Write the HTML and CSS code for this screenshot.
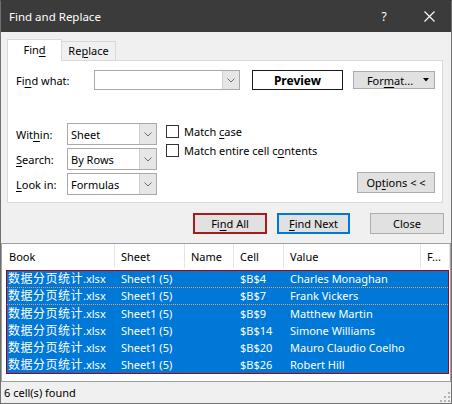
FILE: index.html
```html
<!DOCTYPE html>
<html lang="en">
<head>
    <meta charset="UTF-8">
    <meta name="viewport" content="width=device-width, initial-scale=1.0">
    <title>Find and Replace</title>
    <link rel="stylesheet" href="styles.css">
</head>
<body>
<div class="window">
    <div class="titlebar">
        <span class="title">Find and Replace</span>
        <span class="help">?</span>
        <span class="close-x">
            <svg width="11" height="11" viewBox="0 0 11 11"><path d="M0.5 0.5 L10.5 10.5 M10.5 0.5 L0.5 10.5" stroke="#fff" stroke-width="1.1" fill="none"/></svg>
        </span>
    </div>

    <div class="dialog">
        <div class="tabs">
            <div class="tab active">Fin<u>d</u></div>
            <div class="tab">Re<u>p</u>lace</div>
        </div>

        <div class="panel">
            <div class="find-row">
                <label class="find-label">Fi<u>n</u>d what:</label>
                <div class="combo combo-find">
                    <span class="combo-text"></span>
                    <span class="combo-btn"><svg width="8" height="5" viewBox="0 0 8 5"><polyline points="0.5,0.5 4,4 7.5,0.5" stroke="#6d6d6d" fill="none"/></svg></span>
                </div>
                <div class="preview">Preview</div>
                <div class="btn format"><span>For<u>m</u>at...</span><svg class="caret" width="6" height="4" viewBox="0 0 6 4"><polygon points="0,0 6,0 3,3.5" fill="#000"/></svg></div>
            </div>

            <div class="opts">
                <div class="selects">
                    <div class="sel-row">
                        <label class="sel-label">Wit<u>h</u>in:</label>
                        <div class="combo combo-sel">
                            <span class="combo-text">Sheet</span>
                            <span class="combo-btn"><svg width="8" height="5" viewBox="0 0 8 5"><polyline points="0.5,0.5 4,4 7.5,0.5" stroke="#6d6d6d" fill="none"/></svg></span>
                        </div>
                    </div>
                    <div class="sel-row">
                        <label class="sel-label"><u>S</u>earch:</label>
                        <div class="combo combo-sel">
                            <span class="combo-text">By Rows</span>
                            <span class="combo-btn"><svg width="8" height="5" viewBox="0 0 8 5"><polyline points="0.5,0.5 4,4 7.5,0.5" stroke="#6d6d6d" fill="none"/></svg></span>
                        </div>
                    </div>
                    <div class="sel-row">
                        <label class="sel-label"><u>L</u>ook in:</label>
                        <div class="combo combo-sel">
                            <span class="combo-text">Formulas</span>
                            <span class="combo-btn"><svg width="8" height="5" viewBox="0 0 8 5"><polyline points="0.5,0.5 4,4 7.5,0.5" stroke="#6d6d6d" fill="none"/></svg></span>
                        </div>
                    </div>
                </div>

                <div class="checks">
                    <div class="check-row"><span class="checkbox"></span><span>Match <u>c</u>ase</span></div>
                    <div class="check-row"><span class="checkbox"></span><span>Match entire cell c<u>o</u>ntents</span></div>
                </div>

                <div class="btn options"><span>Op<u>t</u>ions &lt; &lt;</span></div>
            </div>
        </div>

        <div class="actions">
            <div class="btn action find-all"><span>Fi<u>n</u>d All</span></div>
            <div class="btn action find-next"><span><u>F</u>ind Next</span></div>
            <div class="btn action close">Close</div>
        </div>
    </div>

    <div class="results">
        <div class="head">
            <div class="hcell first">Book</div>
            <div class="hcell">Sheet</div>
            <div class="hcell">Name</div>
            <div class="hcell">Cell</div>
            <div class="hcell">Value</div>
            <div class="hcell last">F...</div>
        </div>
        <div class="rows">
            <div class="row dotted-bottom">
                <span class="c-book"><span class="cjk">数据分页统计</span>.xlsx</span>
                <span>Sheet1 (5)</span><span></span><span>$B$4</span><span>Charles Monaghan</span>
            </div>
            <div class="row dotted-bottom">
                <span class="c-book"><span class="cjk">数据分页统计</span>.xlsx</span>
                <span>Sheet1 (5)</span><span></span><span>$B$7</span><span>Frank Vickers</span>
            </div>
            <div class="row">
                <span class="c-book"><span class="cjk">数据分页统计</span>.xlsx</span>
                <span>Sheet1 (5)</span><span></span><span>$B$9</span><span>Matthew Martin</span>
            </div>
            <div class="row">
                <span class="c-book"><span class="cjk">数据分页统计</span>.xlsx</span>
                <span>Sheet1 (5)</span><span></span><span>$B$14</span><span>Simone Williams</span>
            </div>
            <div class="row">
                <span class="c-book"><span class="cjk">数据分页统计</span>.xlsx</span>
                <span>Sheet1 (5)</span><span></span><span>$B$20</span><span>Mauro Claudio Coelho</span>
            </div>
            <div class="row">
                <span class="c-book"><span class="cjk">数据分页统计</span>.xlsx</span>
                <span>Sheet1 (5)</span><span></span><span>$B$26</span><span>Robert Hill</span>
            </div>
        </div>
    </div>

    <div class="status">
        <span>6 cell(s) found</span>
        <svg class="grip" width="10" height="10" viewBox="0 0 10 10">
            <rect x="8" y="0" width="2" height="2" fill="#b4b4b4"/>
            <rect x="4" y="4" width="2" height="2" fill="#b4b4b4"/>
            <rect x="8" y="4" width="2" height="2" fill="#b4b4b4"/>
            <rect x="0" y="8" width="2" height="2" fill="#b4b4b4"/>
            <rect x="4" y="8" width="2" height="2" fill="#b4b4b4"/>
            <rect x="8" y="8" width="2" height="2" fill="#b4b4b4"/>
        </svg>
    </div>
</div>
</body>
</html>
```

FILE: styles.css
```css
body {
    margin: 0;
    font-family: "Noto Sans", "Noto Sans CJK SC", sans-serif;
    font-size: 11px;
    color: #000;
    background: #f0f0f0;
}
u {
    text-decoration-thickness: 1px;
    text-underline-offset: 2px;
}
.window {
    width: 452px;
    height: 404px;
    box-sizing: border-box;
    border: 1px solid #707070;
    border-top-color: #3b3b3b;
    background: #f0f0f0;
    display: flex;
    flex-direction: column;
}

/* title bar */
.titlebar {
    height: 31px;
    flex: none;
    background: #3b3b3b;
    color: #fff;
    display: flex;
    align-items: center;
    padding-left: 8px;
}
.title {
    font-size: 11.5px;
}
.help {
    margin-left: auto;
    width: 46px;
    text-align: center;
    font-size: 12px;
}
.close-x {
    width: 44px;
    display: flex;
    justify-content: center;
}

/* upper dialog part */
.dialog {
    padding: 0 8px 0 6px;
    flex: none;
}
.tabs {
    display: flex;
    align-items: flex-end;
    margin-top: 7px;
    height: 21px;
}
.tab {
    box-sizing: border-box;
    height: 19px;
    width: 54px;
    border: 1px solid #d9d9d9;
    border-bottom: none;
    border-left: none;
    text-align: center;
    line-height: 18px;
    background: #f0f0f0;
}
.tab.active {
    position: relative;
    z-index: 1;
    width: 55px;
    height: 22px;
    margin-bottom: -1px;
    border-left: 1px solid #d9d9d9;
    background: #fff;
    line-height: 19px;
}
.panel {
    box-sizing: border-box;
    height: 143px;
    border: 1px solid #d9d9d9;
    background: #fff;
}
.find-row {
    display: flex;
    align-items: center;
    margin-top: 9px;
    padding-left: 8px;
    height: 20px;
}
.find-label {
    width: 78px;
}
.combo {
    box-sizing: border-box;
    display: flex;
    border: 1px solid #a9a9a9;
    background: #fff;
}
.combo-find {
    width: 146px;
    height: 20px;
}
.combo-text {
    flex: 1;
    padding-left: 3px;
    display: flex;
    align-items: center;
}
.combo-btn {
    width: 16px;
    background: #e6e6e6;
    border-left: 1px solid #cfcfcf;
    display: flex;
    align-items: center;
    justify-content: center;
}
.preview {
    box-sizing: border-box;
    width: 91px;
    height: 20px;
    margin-left: 12px;
    border: 1px solid #1a1a1a;
    font-weight: bold;
    font-size: 12px;
    display: flex;
    align-items: center;
    justify-content: center;
}
.btn {
    box-sizing: border-box;
    background: #e1e1e1;
    border: 1px solid #adadad;
    display: flex;
    align-items: center;
    justify-content: center;
}
.format {
    width: 82px;
    height: 18px;
    margin-left: 10px;
    padding-left: 8px;
}
.caret {
    margin-left: 10px;
}

.opts {
    display: flex;
    margin-top: 33px;
}
.selects {
    padding-left: 8px;
    display: flex;
    flex-direction: column;
    gap: 3px;
}
.sel-row {
    display: flex;
    align-items: center;
    height: 22px;
}
.sel-label {
    width: 51px;
}
.combo-sel {
    width: 90px;
    height: 22px;
}
.checks {
    margin-left: 9px;
    margin-top: -1px;
}
.check-row {
    display: flex;
    align-items: center;
    height: 19px;
}
.checkbox {
    box-sizing: border-box;
    width: 13px;
    height: 13px;
    border: 1px solid #333;
    background: #fff;
    margin-right: 5px;
}
.options {
    margin-left: auto;
    margin-right: 7px;
    margin-bottom: 2px;
    align-self: flex-end;
    width: 78px;
    height: 21px;
}

.actions {
    display: flex;
    justify-content: flex-end;
    margin-top: 10px;
    margin-right: -1px;
}
.action {
    height: 21px;
    width: 74px;
}
.find-all {
    border: 2px solid #a61c1c;
}
.find-next {
    width: 73px;
    margin-left: 10px;
    border: 2px solid #0078d7;
}
.close {
    margin-left: 20px;
}

/* result list */
.results {
    margin-top: 9px;
    height: 139px;
    flex: none;
    box-sizing: border-box;
    border: 1px solid #a0a0a0;
    background: #fff;
}
.head {
    display: grid;
    grid-template-columns: 113px 70px 49px 50px 137px 1fr;
    height: 24px;
}
.hcell {
    border-right: 1px solid #e5e5e5;
    padding-left: 6px;
    display: flex;
    align-items: center;
}
.hcell.first {
    padding-left: 7px;
}
.rows {
    margin: 2px 1px 0 4px;
    border: 1px solid #a4000f;
    background: #0078d7;
    color: #fff;
}
.row {
    box-sizing: border-box;
    display: grid;
    grid-template-columns: 108px 70px 49px 50px 1fr;
    height: 17px;
    line-height: 16px;
    align-items: center;
    white-space: nowrap;
}
.row > span {
    padding-left: 6px;
}
.row > .c-book {
    padding-left: 1px;
}
.dotted-bottom {
    border-bottom: 1px dotted #f79a4e;
}
.cjk {
    font-family: "Noto Sans CJK SC", sans-serif;
    font-size: 12px;
    letter-spacing: 0.5px;
    line-height: 1;
}

.status {
    flex: 1;
    display: flex;
    align-items: center;
    padding-left: 3px;
    position: relative;
}
.grip {
    position: absolute;
    right: 1px;
    bottom: 1px;
}
```
